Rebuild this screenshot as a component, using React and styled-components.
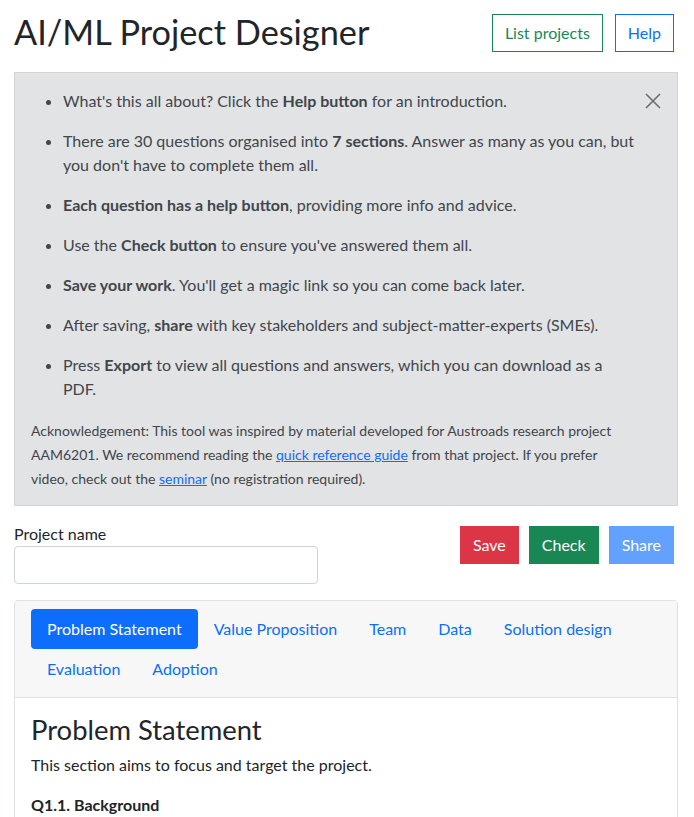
import React from "react";
import styled, { createGlobalStyle } from "styled-components";

const GlobalStyles = createGlobalStyle`
  * { box-sizing: border-box; }
  body {
    margin: 0;
    font-family: Lato, "Open Sans", sans-serif;
    font-size: 16px;
    line-height: 1.5;
    color: #212529;
    background: #fff;
  }
`;

const Page = styled.div`
  padding: 11px 16px 0 14px;
`;

const Header = styled.header`
  display: flex;
  justify-content: space-between;
  align-items: flex-start;
`;

const Title = styled.h1`
  margin: 0;
  font-size: 34.3px;
  font-weight: 400;
  line-height: 1.2;
`;

const HeaderButtons = styled.div`
  display: flex;
  gap: 12px;
  margin: 3px 4px 0 0;
`;

const OutlineButton = styled.button`
  font-family: inherit;
  font-size: 16px;
  line-height: 24px;
  padding: 6px 12px;
  background: #fff;
  color: ${(p) => p.$color};
  border: 1px solid ${(p) => p.$color};
  border-radius: 0;
`;

const Alert = styled.div`
  position: relative;
  margin-top: 20px;
  padding: 16px 40px 14px 16px;
  background: #e2e3e5;
  border: 1px solid #d3d6d8;
  color: #41464b;
`;

const CloseButton = styled.button`
  position: absolute;
  top: 0;
  right: 0;
  padding: 20px 16px;
  border: 0;
  background: transparent;
  display: flex;
  svg { display: block; }
`;

const List = styled.ul`
  margin: 0 0 18px;
  padding-left: 32px;
`;

const Item = styled.li`
  margin-bottom: 16px;
`;

const Ack = styled.p`
  margin: 0;
  font-size: 14px;
  line-height: 24px;
`;

const Link = styled.a`
  color: #0d6efd;
  text-decoration: underline;
`;

const FormRow = styled.div`
  display: flex;
  justify-content: space-between;
  align-items: flex-start;
  margin-top: 16px;
`;

const Field = styled.div`
  display: flex;
  flex-direction: column;
`;

const Label = styled.label`
  font-size: 16px;
  line-height: 24px;
`;

const Input = styled.input`
  width: 304px;
  height: 38px;
  border: 1px solid #ced4da;
  border-radius: 4px;
  font-family: inherit;
  font-size: 16px;
  padding: 6px 12px;
`;

const Actions = styled.div`
  display: flex;
  gap: 10px;
  margin: 4px 4px 0 0;
`;

const SolidButton = styled.button`
  font-family: inherit;
  font-size: 16px;
  line-height: 24px;
  padding: 7px 13px;
  border: 0;
  border-radius: 0;
  color: #fff;
  background: ${(p) => p.$bg};
`;

const Card = styled.section`
  margin-top: 16px;
  border: 1px solid #dee2e6;
  border-bottom: 0;
  border-radius: 4px 4px 0 0;
`;

const CardHeader = styled.nav`
  display: flex;
  flex-wrap: wrap;
  padding: 8px 16px;
  background: #f7f7f7;
  border-bottom: 1px solid #dee2e6;
`;

const Pill = styled.a`
  padding: 8px 16px;
  line-height: 24px;
  border-radius: 4px;
  color: ${(p) => (p.$active ? "#fff" : "#0d6efd")};
  background: ${(p) => (p.$active ? "#0d6efd" : "transparent")};
  text-decoration: none;
`;

const CardBody = styled.div`
  padding: 16px;
`;

const SectionTitle = styled.h2`
  margin: 0 0 6px;
  font-size: 27.4px;
  font-weight: 400;
  line-height: 1.2;
`;

const Intro = styled.p`
  margin: 0 0 16px;
`;

const Question = styled.h6`
  margin: 0;
  font-size: 16px;
  font-weight: 700;
  line-height: 24px;
`;

const tabs = [
  "Problem Statement",
  "Value Proposition",
  "Team",
  "Data",
  "Solution design",
  "Evaluation",
  "Adoption",
];

const App = () => {
  return (
    <>
      <GlobalStyles />
      <Page>
        <Header>
          <Title>AI/ML Project Designer</Title>
          <HeaderButtons>
            <OutlineButton $color="#198754">List projects</OutlineButton>
            <OutlineButton $color="#0d6efd">Help</OutlineButton>
          </HeaderButtons>
        </Header>

        <Alert>
          <List>
            <Item>What's this all about? Click the <b>Help button</b> for an introduction.</Item>
            <Item>There are 30 questions organised into <b>7 sections</b>. Answer as many as you can, but you don't have to complete them all.</Item>
            <Item><b>Each question has a help button</b>, providing more info and advice.</Item>
            <Item>Use the <b>Check button</b> to ensure you've answered them all.</Item>
            <Item><b>Save your work</b>. You'll get a magic link so you can come back later.</Item>
            <Item>After saving, <b>share</b> with key stakeholders and subject-matter-experts (SMEs).</Item>
            <Item>Press <b>Export</b> to view all questions and answers, which you can download as a PDF.</Item>
          </List>
          <Ack>
            Acknowledgement: This tool was inspired by material developed for Austroads research project AAM6201. We recommend reading the <Link href="#">quick reference guide</Link> from that project. If you prefer video, check out the <Link href="#">seminar</Link> (no registration required).
          </Ack>
          <CloseButton aria-label="Close">
            <svg width="16" height="16" viewBox="0 0 16 16">
              <path d="M1 1 L15 15 M15 1 L1 15" stroke="#6c6d6f" strokeWidth="1.6" />
            </svg>
          </CloseButton>
        </Alert>

        <FormRow>
          <Field>
            <Label htmlFor="pname">Project name</Label>
            <Input id="pname" />
          </Field>
          <Actions>
            <SolidButton $bg="#dc3545">Save</SolidButton>
            <SolidButton $bg="#198754">Check</SolidButton>
            <SolidButton $bg="#62a1fe">Share</SolidButton>
          </Actions>
        </FormRow>

        <Card>
          <CardHeader>
            {tabs.map((t, i) => (
              <Pill key={t} href="#" $active={i === 0}>{t}</Pill>
            ))}
          </CardHeader>
          <CardBody>
            <SectionTitle>Problem Statement</SectionTitle>
            <Intro>This section aims to focus and target the project.</Intro>
            <Question>Q1.1. Background</Question>
          </CardBody>
        </Card>
      </Page>
    </>
  );
};

export default App;
